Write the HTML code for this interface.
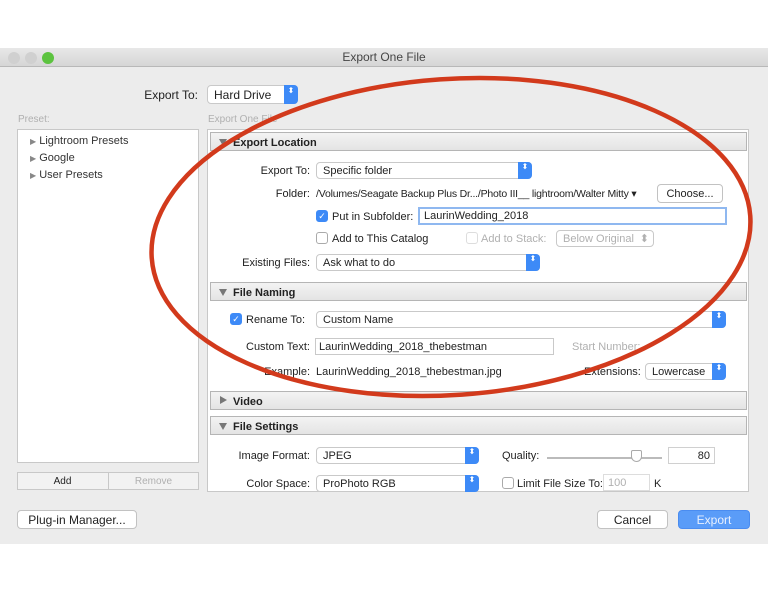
<!DOCTYPE html>
<html><head><style>
*{margin:0;padding:0;box-sizing:border-box}
body{width:768px;height:593px;background:#fff;font-family:"Liberation Sans",sans-serif;font-size:11px;color:#222;position:relative;overflow:hidden}
.a{position:absolute}
.win{left:0;top:48px;width:768px;height:496px;background:#ececec}
.tb{left:0;top:48px;width:768px;height:19px;background:linear-gradient(#e8e8e8,#d6d6d6);border-bottom:1px solid #b8b8b8;text-align:center;font-size:12px;line-height:19px;color:#444}
.dot{width:12px;height:12px;border-radius:6px;top:52px}
.box{background:#fff;border:1px solid #c8c8c8}
.pop{background:#fff;border:1px solid #c9c9c9;border-radius:4px;height:17px;line-height:17px;padding-left:6px}
.pop .arr{position:absolute;right:-1px;top:-1px;width:14px;height:17px;background:#3d8af7;border-radius:0 4px 4px 0;color:#fff;font-size:8px;line-height:8px;text-align:center;padding-top:1px}
.hdr{background:linear-gradient(#f3f3f3,#e4e4e4);border:1px solid #b5b5b5;height:19px;font-weight:bold;line-height:20px;padding-left:22px}
.hdr:before{content:"";position:absolute;left:8px;top:6px;border-left:4px solid transparent;border-right:4px solid transparent;border-top:7px solid #777}
.hdr.c:before{left:9px;top:4px;border-top:4px solid transparent;border-bottom:4px solid transparent;border-left:7px solid #777;border-right:0}
.r{text-align:right}
.cb{width:12px;height:12px;border:1px solid #aaa;border-radius:3px;background:#fff}
.cb.on{background:#3d8af7;border-color:#3d8af7;color:#fff;font-size:9px;line-height:10px;text-align:center}
.btn{background:#fff;border:1px solid #c2c2c2;border-radius:4px;text-align:center;height:19px;line-height:19px;font-size:12px}
.g{color:#b0b0b0}
</style></head><body>
<div class="a win"></div>
<div class="a tb">Export One File</div>
<div class="a dot" style="left:8px;background:#d0d0d0"></div>
<div class="a dot" style="left:25px;background:#d0d0d0"></div>
<div class="a dot" style="left:42px;background:#5cc33f"></div>

<div class="a r" style="left:100px;top:88px;width:98px;font-size:12px">Export To:</div>
<div class="a pop" style="left:207px;top:85px;width:91px;height:19px;line-height:19px;font-size:12px">Hard Drive<div class="arr" style="height:19px;padding-top:2px">⬍</div></div>

<div class="a g" style="left:18px;top:114px;font-size:10px">Preset:</div>
<div class="a g" style="left:208px;top:114px;font-size:10px">Export One File</div>

<div class="a box" style="left:17px;top:129px;width:182px;height:334px"></div>
<div class="a" style="left:30px;top:133px;color:#333;line-height:17px"><span style="color:#888;font-size:8px">▶</span> Lightroom Presets<br><span style="color:#888;font-size:8px">▶</span> Google<br><span style="color:#888;font-size:8px">▶</span> User Presets</div>
<div class="a" style="left:17px;top:472px;width:182px;height:18px;border:1px solid #c8c8c8;background:#f2f2f2"></div>
<div class="a" style="left:17px;top:476px;width:91px;text-align:center;font-size:10px">Add</div>
<div class="a" style="left:108px;top:472px;width:1px;height:18px;background:#c8c8c8"></div>
<div class="a g" style="left:108px;top:476px;width:91px;text-align:center;font-size:10px">Remove</div>

<div class="a box" style="left:207px;top:129px;width:542px;height:363px"></div>
<div class="a hdr" style="left:210px;top:132px;width:537px">Export Location</div>
<div class="a r" style="left:220px;top:165px;width:90px">Export To:</div>
<div class="a pop" style="left:316px;top:162px;width:216px">Specific folder<div class="arr">⬍</div></div>
<div class="a r" style="left:220px;top:188px;width:90px">Folder:</div>
<div class="a" style="left:316px;top:188px;font-size:10.5px;letter-spacing:-0.2px">/Volumes/Seagate Backup Plus Dr.../Photo III__ lightroom/Walter Mitty ▾</div>
<div class="a btn" style="left:657px;top:184px;width:66px;font-size:11px">Choose...</div>
<div class="a cb on" style="left:316px;top:210px">✓</div>
<div class="a" style="left:332px;top:211px">Put in Subfolder:</div>
<div class="a" style="left:418px;top:207px;width:309px;height:18px;border:2px solid #8fb8f0;background:#fff;padding-left:4px;line-height:15px">LaurinWedding_2018</div>
<div class="a cb" style="left:316px;top:232px"></div>
<div class="a" style="left:332px;top:233px">Add to This Catalog</div>
<div class="a cb" style="left:466px;top:232px;border-color:#ddd"></div>
<div class="a g" style="left:481px;top:233px">Add to Stack:</div>
<div class="a pop g" style="left:556px;top:230px;width:98px">Below Original<span style="position:absolute;right:4px">⬍</span></div>
<div class="a r" style="left:220px;top:257px;width:90px">Existing Files:</div>
<div class="a pop" style="left:316px;top:254px;width:224px">Ask what to do<div class="arr">⬍</div></div>

<div class="a hdr" style="left:210px;top:282px;width:537px">File Naming</div>
<div class="a cb on" style="left:230px;top:313px">✓</div>
<div class="a" style="left:246px;top:314px">Rename To:</div>
<div class="a pop" style="left:316px;top:311px;width:410px">Custom Name<div class="arr">⬍</div></div>
<div class="a r" style="left:220px;top:341px;width:90px">Custom Text:</div>
<div class="a" style="left:315px;top:338px;width:239px;height:17px;border:1px solid #c9c9c9;background:#fff;padding-left:3px;line-height:17px">LaurinWedding_2018_thebestman</div>
<div class="a g" style="left:572px;top:341px">Start Number:</div>
<div class="a r" style="left:220px;top:366px;width:90px">Example:</div>
<div class="a" style="left:316px;top:366px">LaurinWedding_2018_thebestman.jpg</div>
<div class="a" style="left:584px;top:366px">Extensions:</div>
<div class="a pop" style="left:645px;top:363px;width:81px">Lowercase<div class="arr">⬍</div></div>

<div class="a hdr c" style="left:210px;top:391px;width:537px">Video</div>
<div class="a hdr" style="left:210px;top:416px;width:537px">File Settings</div>
<div class="a r" style="left:220px;top:450px;width:90px">Image Format:</div>
<div class="a pop" style="left:316px;top:447px;width:163px">JPEG<div class="arr">⬍</div></div>
<div class="a" style="left:502px;top:450px">Quality:</div>
<div class="a" style="left:547px;top:457px;width:115px;height:2px;background:#bbb"></div>
<div class="a" style="left:631px;top:450px;width:11px;height:12px;background:#fff;border:1px solid #aaa;border-radius:2px 2px 6px 6px"></div>
<div class="a" style="left:668px;top:447px;width:47px;height:17px;border:1px solid #d0d0d0;background:#fff;text-align:right;padding-right:4px;line-height:17px">80</div>
<div class="a r" style="left:220px;top:478px;width:90px">Color Space:</div>
<div class="a pop" style="left:316px;top:475px;width:163px">ProPhoto RGB<div class="arr">⬍</div></div>
<div class="a cb" style="left:502px;top:477px"></div>
<div class="a" style="left:517px;top:478px">Limit File Size To:</div>
<div class="a g" style="left:603px;top:474px;width:47px;height:17px;border:1px solid #ddd;background:#fff;padding-left:4px;line-height:17px">100</div>
<div class="a" style="left:654px;top:478px">K</div>

<div class="a btn" style="left:17px;top:510px;width:120px">Plug-in Manager...</div>
<div class="a btn" style="left:597px;top:510px;width:71px">Cancel</div>
<div class="a btn" style="left:678px;top:510px;width:72px;background:#5a9cf8;border-color:#4a8cf0;color:#e8f0ff">Export</div>

<svg class="a" style="left:0;top:0" width="768" height="593"><ellipse cx="451" cy="237" rx="300" ry="158" transform="rotate(-4 451 237)" fill="none" stroke="#d23a1c" stroke-width="4.5"/></svg>
</body></html>
